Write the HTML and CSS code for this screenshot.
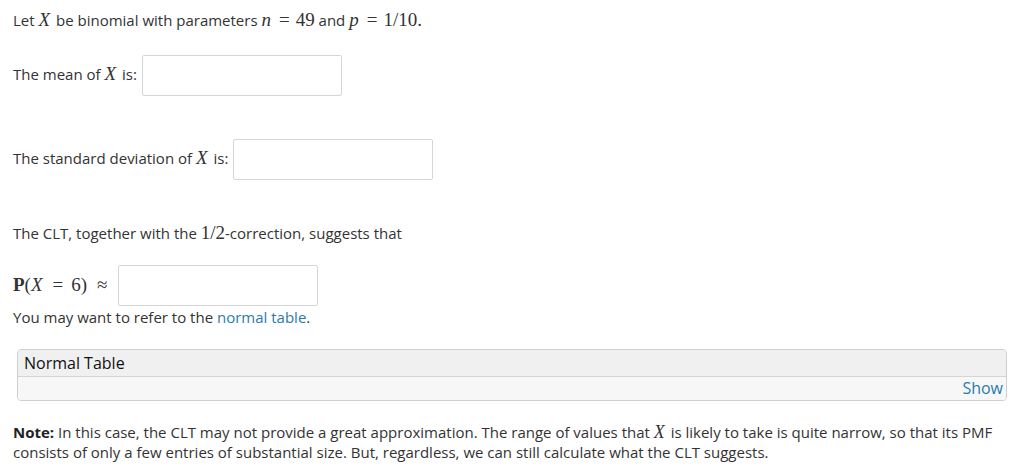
FILE: index.html
```html
<!DOCTYPE html>
<html>
<head>
<meta charset="utf-8">
<link rel="stylesheet" href="styles.css">
</head>
<body>
<div class="page">
  <p class="line first">Let <span class="m i">X</span> be binomial with parameters <span class="m i">n</span><span class="m op">=</span><span class="m">49</span> and <span class="m i">p</span><span class="m op">=</span><span class="m">1/10.</span></p>

  <div class="row row-mean">
    <span class="label">The mean of <span class="m i">X</span> is:</span>
    <span class="box"></span>
  </div>

  <div class="row row-sd">
    <span class="label">The standard deviation of <span class="m i">X</span> is:</span>
    <span class="box"></span>
  </div>

  <p class="line clt">The CLT, together with the <span class="m">1/2</span>-correction, suggests that</p>

  <div class="row row-p">
    <span class="label m"><b class="bp">P</b>(<span class="i">X</span><span class="op">=</span>6)<span class="op approx">≈</span></span>
    <span class="box"></span>
  </div>

  <p class="line refer">You may want to refer to the <a class="link">normal table</a>.</p>

  <div class="panel">
    <div class="panel-head">Normal Table</div>
    <div class="panel-body"><a class="link">Show</a></div>
  </div>

  <p class="note"><b>Note:</b> In this case, the CLT may not provide a great approximation. The range of values that <span class="m i">X</span> is likely to take is quite narrow, so that its PMF consists of only a few entries of substantial size. But, regardless, we can still calculate what the CLT suggests.</p>
</div>
</body>
</html>
```

FILE: styles.css
```css
html, body {
  margin: 0;
  padding: 0;
  background: #fff;
}
body {
  font-family: "Open Sans", "Liberation Sans", sans-serif;
  font-size: 15px;
  line-height: 20px;
  color: #333;
}
.page {
  padding: 10px 17px 0 13px;
}
.m {
  font-family: "Liberation Serif", "DejaVu Serif", serif;
  font-size: 19px;
  line-height: 1;
}
.i {
  font-style: italic;
}
.i::after {
  content: "";
  margin-right: 2px;
}
.op {
  margin: 0 6px;
}
.bp {
  font-weight: bold;
}
.line {
  margin: 0;
}
.row {
  display: flex;
  align-items: center;
  gap: 5px;
}
.label {
  padding-bottom: 3px;
}
.box {
  display: block;
  width: 198px;
  height: 39px;
  border: 1px solid #d6d6d6;
  border-radius: 2px;
  background: #fff;
}
.row-mean {
  margin-top: 25px;
}
.row-sd {
  margin-top: 43px;
}
.clt {
  margin-top: 43px;
}
.row-p {
  margin-top: 22px;
}
.row-p .op {
  margin: 0 8px;
}
.row-p .approx {
  margin: 0 0 0 10px;
}
.row-p .box {
  margin-left: 5px;
}
.refer {
  margin-top: 1px;
}
.link {
  color: #2a7ab0;
  text-decoration: none;
}
.panel {
  margin: 22px 0 0 4px;
  border: 1px solid #cfcfcf;
  border-radius: 4px;
  overflow: hidden;
}
.panel-head {
  background: #f0f0f0;
  height: 26px;
  line-height: 26px;
  padding-left: 6px;
  font-size: 16px;
  color: #111;
  border-bottom: 1px solid #d4d4d4;
}
.panel-body {
  background: #f7f7f7;
  height: 23px;
  line-height: 23px;
  text-align: right;
  padding-right: 3px;
  font-size: 16px;
}
.note {
  margin: 21px 0 0 0;
  padding-right: 13px;
}
.note b {
  font-weight: bold;
  color: #222;
}
.note .m {
  font-size: 18px;
}
```
